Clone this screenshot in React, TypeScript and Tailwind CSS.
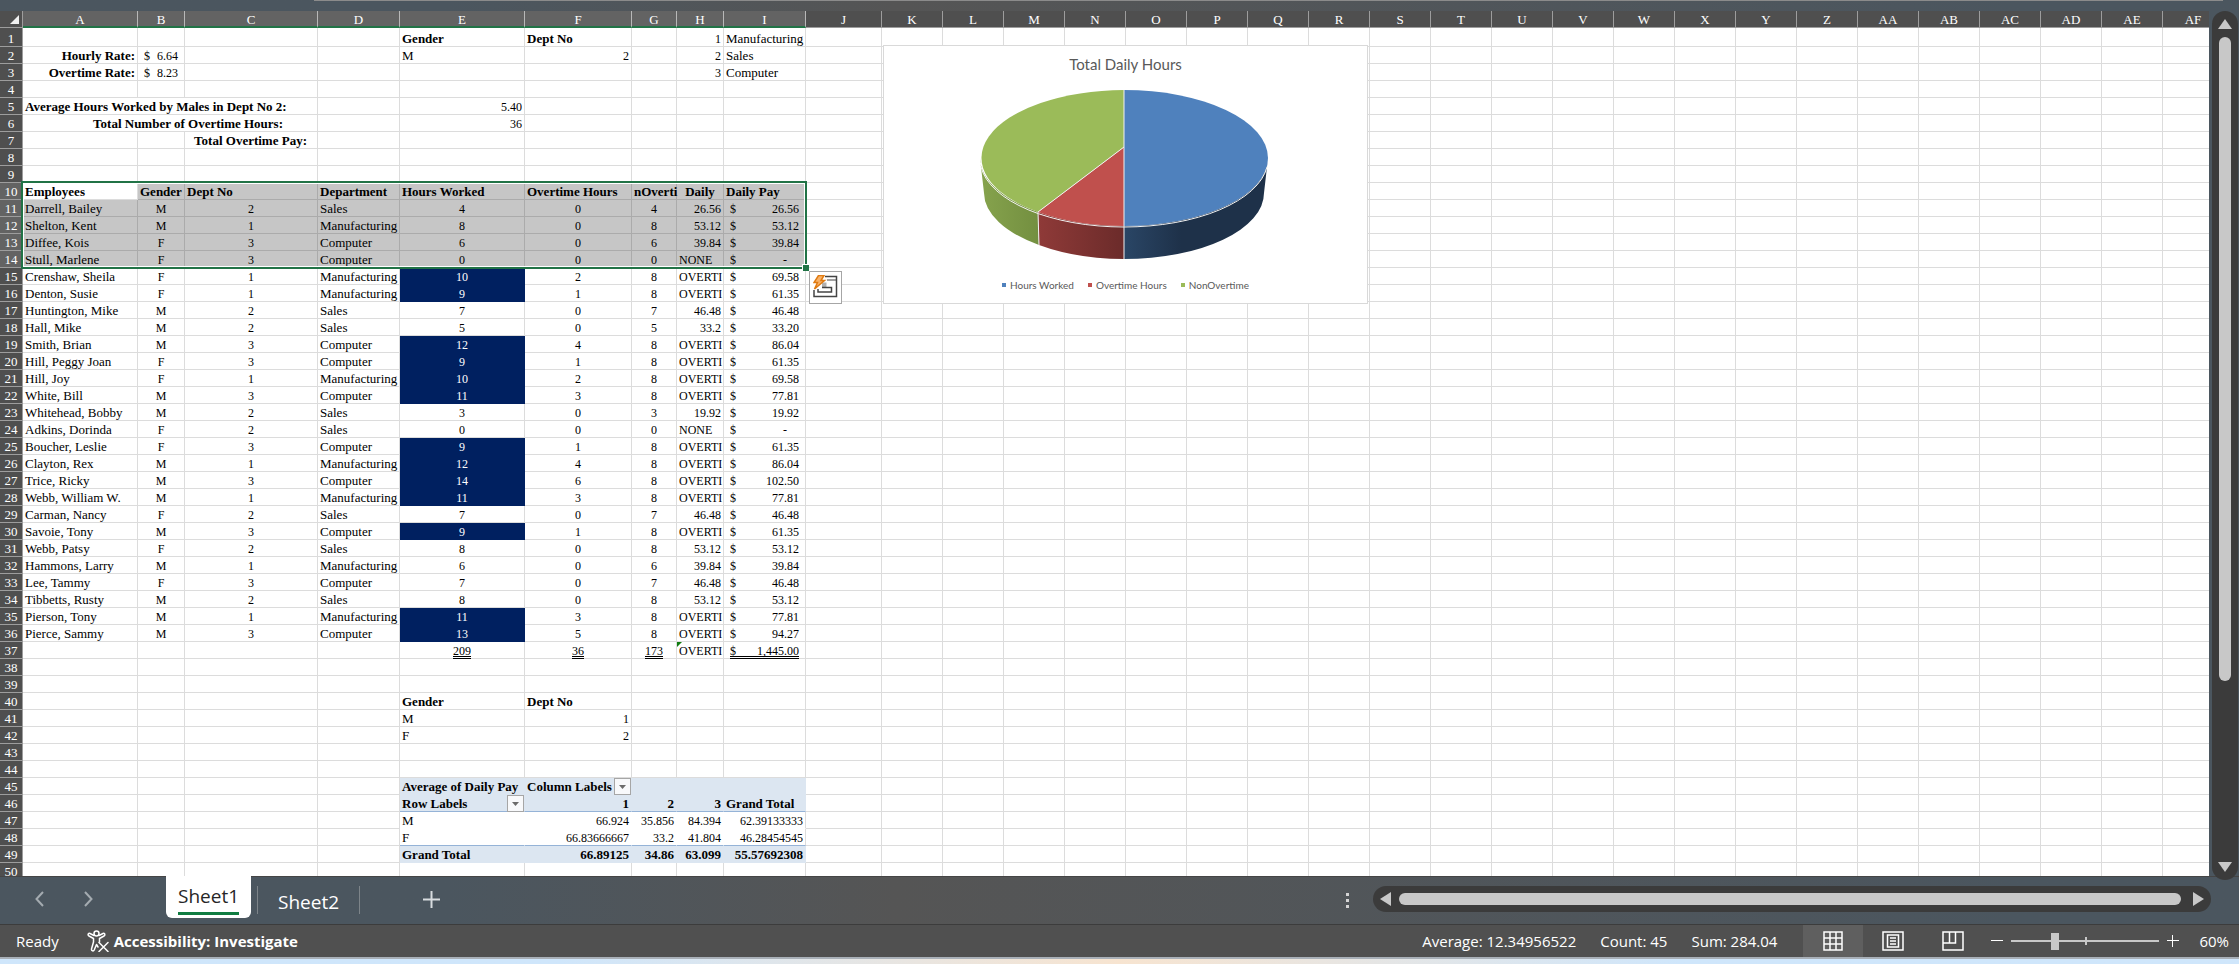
import { ReactNode } from "react";

type Align = "left" | "center" | "right";

type Cell = {
  v?: ReactNode;
  bold?: boolean;
  num?: boolean;
  align?: Align;
  span?: number;
  cls?: string;
  money?: boolean;
  total?: boolean;
};

const COLS = [
  "A", "B", "C", "D", "E", "F", "G", "H", "I", "J", "K", "L", "M", "N", "O", "P",
  "Q", "R", "S", "T", "U", "V", "W", "X", "Y", "Z", "AA", "AB", "AC", "AD", "AE", "AF",
];

const WIDTHS = [
  "w-[115px]", "w-[47px]", "w-[133px]", "w-[82px]", "w-[125px]",
  "w-[107px]", "w-[45px]", "w-[47px]", "w-[82px]", "w-[76px]",
];

// name, gender, dept, department, hours, overtime, non overtime, daily, pay
const EMPLOYEES = [
  ["Darrell, Bailey", "M", "2", "Sales", "4", "0", "4", "26.56", "26.56"],
  ["Shelton, Kent", "M", "1", "Manufacturing", "8", "0", "8", "53.12", "53.12"],
  ["Diffee, Kois", "F", "3", "Computer", "6", "0", "6", "39.84", "39.84"],
  ["Stull, Marlene", "F", "3", "Computer", "0", "0", "0", "NONE", "-"],
  ["Crenshaw, Sheila", "F", "1", "Manufacturing", "10", "2", "8", "OVERTI", "69.58"],
  ["Denton, Susie", "F", "1", "Manufacturing", "9", "1", "8", "OVERTI", "61.35"],
  ["Huntington, Mike", "M", "2", "Sales", "7", "0", "7", "46.48", "46.48"],
  ["Hall, Mike", "M", "2", "Sales", "5", "0", "5", "33.2", "33.20"],
  ["Smith, Brian", "M", "3", "Computer", "12", "4", "8", "OVERTI", "86.04"],
  ["Hill, Peggy Joan", "F", "3", "Computer", "9", "1", "8", "OVERTI", "61.35"],
  ["Hill, Joy", "F", "1", "Manufacturing", "10", "2", "8", "OVERTI", "69.58"],
  ["White, Bill", "M", "3", "Computer", "11", "3", "8", "OVERTI", "77.81"],
  ["Whitehead, Bobby", "M", "2", "Sales", "3", "0", "3", "19.92", "19.92"],
  ["Adkins, Dorinda", "F", "2", "Sales", "0", "0", "0", "NONE", "-"],
  ["Boucher, Leslie", "F", "3", "Computer", "9", "1", "8", "OVERTI", "61.35"],
  ["Clayton, Rex", "M", "1", "Manufacturing", "12", "4", "8", "OVERTI", "86.04"],
  ["Trice, Ricky", "M", "3", "Computer", "14", "6", "8", "OVERTI", "102.50"],
  ["Webb, William W.", "M", "1", "Manufacturing", "11", "3", "8", "OVERTI", "77.81"],
  ["Carman, Nancy", "F", "2", "Sales", "7", "0", "7", "46.48", "46.48"],
  ["Savoie, Tony", "M", "3", "Computer", "9", "1", "8", "OVERTI", "61.35"],
  ["Webb, Patsy", "F", "2", "Sales", "8", "0", "8", "53.12", "53.12"],
  ["Hammons, Larry", "M", "1", "Manufacturing", "6", "0", "6", "39.84", "39.84"],
  ["Lee, Tammy", "F", "3", "Computer", "7", "0", "7", "46.48", "46.48"],
  ["Tibbetts, Rusty", "M", "2", "Sales", "8", "0", "8", "53.12", "53.12"],
  ["Pierson, Tony", "M", "1", "Manufacturing", "11", "3", "8", "OVERTI", "77.81"],
  ["Pierce, Sammy", "M", "3", "Computer", "13", "5", "8", "OVERTI", "94.27"],
];

const text = (v: ReactNode): Cell => ({ v });
const bold = (v: ReactNode, align: Align = "left"): Cell => ({ v, bold: true, align });
const num = (v: ReactNode, align: Align = "right"): Cell => ({ v, num: true, align });

const FilterButton = ({ label }: { label: string }) => (
  <button
    aria-label={label}
    className="-mr-[2px] flex size-[17px] shrink-0 items-center justify-center border border-[#a6a6a6] bg-[#f8f9fb]"
  >
    <svg width="7" height="4" viewBox="0 0 7 4">
      <path d="M0 0h7L3.5 4z" fill="#6b6b6b" />
    </svg>
  </button>
);

const PIVOT = "bg-[#dce6f1] border-[#dce6f1]";
const PIVOT_LINE = "bg-[#dce6f1] border-r-[#dce6f1] border-b-[#95b3d7]";
const PLAIN = "border-white";
const PLAIN_LINE = "border-r-white border-b-[#95b3d7]";

const SHEET: Record<number, Record<string, Cell>> = {
  1: { E: bold("Gender"), F: bold("Dept No"), H: num("1"), I: text("Manufacturing") },
  2: {
    A: bold("Hourly Rate:", "right"),
    B: { v: "6.64", money: true },
    E: text("M"),
    F: num("2"),
    H: num("2"),
    I: text("Sales"),
  },
  3: {
    A: bold("Overtime Rate:", "right"),
    B: { v: "8.23", money: true },
    H: num("3"),
    I: text("Computer"),
  },
  5: {
    A: { ...bold("Average Hours Worked by Males in Dept No 2:"), span: 3 },
    E: num("5.40"),
  },
  6: {
    A: { v: <span className="pr-8">Total Number of Overtime Hours:</span>, bold: true, align: "right", span: 3 },
    E: num("36"),
  },
  7: { C: bold(<span className="pr-2">Total Overtime Pay:</span>, "right") },
  10: {
    A: bold("Employees"),
    B: bold("Gender"),
    C: bold("Dept No"),
    D: bold("Department"),
    E: bold("Hours Worked"),
    F: bold("Overtime Hours"),
    G: bold("nOverti", "center"),
    H: bold("Daily", "center"),
    I: bold("Daily Pay"),
  },
  37: {
    E: { v: "209", num: true, align: "center", total: true },
    F: { v: "36", num: true, align: "center", total: true },
    G: { v: "173", num: true, align: "center", total: true },
    H: { v: "OVERTI", num: true },
    I: { v: "1,445.00", money: true, total: true },
  },
  40: { E: bold("Gender"), F: bold("Dept No") },
  41: { E: text("M"), F: num("1") },
  42: { E: text("F"), F: num("2") },
  45: {
    E: { ...bold("Average of Daily Pay"), cls: PIVOT },
    F: {
      v: (
        <span className="flex justify-between">
          Column Labels <FilterButton label="Filter column labels" />
        </span>
      ),
      bold: true,
      cls: PIVOT,
    },
    G: { cls: PIVOT },
    H: { cls: PIVOT },
    I: { cls: PIVOT },
  },
  46: {
    E: {
      v: (
        <span className="flex justify-between">
          Row Labels <FilterButton label="Filter row labels" />
        </span>
      ),
      bold: true,
      cls: PIVOT_LINE,
    },
    F: { ...bold("1", "right"), cls: PIVOT_LINE },
    G: { ...bold("2", "right"), cls: PIVOT_LINE },
    H: { ...bold("3", "right"), cls: PIVOT_LINE },
    I: { ...bold("Grand Total"), cls: PIVOT_LINE },
  },
  47: {
    E: { ...text("M"), cls: PLAIN },
    F: { ...num("66.924"), cls: PLAIN },
    G: { ...num("35.856"), cls: PLAIN },
    H: { ...num("84.394"), cls: PLAIN },
    I: { ...num("62.39133333"), cls: "border-r-[#dcdcdc] border-b-white" },
  },
  48: {
    E: { ...text("F"), cls: PLAIN_LINE },
    F: { ...num("66.83666667"), cls: PLAIN_LINE },
    G: { ...num("33.2"), cls: PLAIN_LINE },
    H: { ...num("41.804"), cls: PLAIN_LINE },
    I: { ...num("46.28454545"), cls: "border-r-[#dcdcdc] border-b-[#95b3d7]" },
  },
  49: {
    E: { ...bold("Grand Total"), cls: PIVOT },
    F: { ...bold("66.89125", "right"), cls: PIVOT },
    G: { ...bold("34.86", "right"), cls: PIVOT },
    H: { ...bold("63.099", "right"), cls: PIVOT },
    I: { ...bold("55.57692308", "right"), cls: PIVOT },
  },
};

EMPLOYEES.forEach((e, i) => {
  const daily = e[7];
  SHEET[11 + i] = {
    A: text(e[0]),
    B: num(e[1], "center"),
    C: num(e[2], "center"),
    D: text(e[3]),
    E: { ...num(e[4], "center"), cls: Number(e[4]) > 8 ? "bg-[#002060] text-white border-[#002060]" : "" },
    F: num(e[5], "center"),
    G: num(e[6], "center"),
    H: num(daily, /^\d/.test(daily) ? "right" : "left"),
    I: { v: e[8], money: true },
  };
});

const GridCell = ({ cell, row, col }: { cell?: Cell; row: number; col: number }) => {
  const selected = row >= 10 && row <= 14 && col < 9 && !(row === 10 && col === 0);
  const align =
    cell?.align === "right" ? "text-right" : cell?.align === "center" ? "text-center" : "text-left";

  let body = cell?.v;
  if (cell?.money) {
    body = (
      <span
        className={
          cell.total
            ? "mx-[5px] flex h-[17px] justify-between border-b-3 border-double border-black"
            : "flex justify-between px-[5px]"
        }
      >
        <span>$</span>
        <span className={cell.v === "-" ? "pr-3" : ""}>{cell.v}</span>
      </span>
    );
  } else if (cell?.total) {
    body = (
      <span className="mx-auto block h-[17px] w-fit border-b-3 border-double border-black">{cell.v}</span>
    );
  }

  return (
    <td
      colSpan={cell?.span}
      className={`h-[17px] border-r border-b p-0 align-bottom ${
        selected ? "border-[#ababab] bg-[#c6c6c6]" : cell?.cls || "border-[#dcdcdc]"
      }`}
    >
      {cell && (
        <div
          className={`relative h-4 whitespace-nowrap leading-[18px] ${align} ${
            cell.money ? "px-px" : "px-[2px]"
          } ${cell.num || cell.money ? "text-xs" : "text-[13px]"} ${cell.bold ? "font-bold" : ""}`}
        >
          {row === 37 && col === 7 && (
            <svg className="absolute top-0 left-0" width="5" height="5">
              <path d="M0 0h5L0 5z" fill="#107c10" />
            </svg>
          )}
          {body}
        </div>
      )}
    </td>
  );
};

const Grid = () => (
  <table className="w-0 table-fixed border-separate border-spacing-0 bg-white font-['Liberation_Serif','Times_New_Roman',serif] text-black">
    <colgroup>
      <col className="w-[23px]" />
      {COLS.map((c, i) => (
        <col key={c} className={WIDTHS[i] || "w-[61px]"} />
      ))}
    </colgroup>
    <thead>
      <tr className="text-[13px] text-white">
        <th className="h-[17px] border-r border-b border-[#9d9d9d] bg-[#4f4f4f] p-0">
          <svg className="ml-[10px]" width="9" height="9">
            <path d="M9 0v9H0z" fill="#f0f0f0" />
          </svg>
        </th>
        {COLS.map((c, i) => (
          <th
            key={c}
            scope="col"
            className={`border-r p-0 align-top font-normal ${
              i < 9
                ? "border-b-2 border-r-[#b8b8b8] border-b-[#217346] bg-[#636363]"
                : "border-b border-[#9d9d9d] bg-[#4f4f4f]"
            }`}
          >
            <div className="h-[15px] leading-[17px]">{c}</div>
          </th>
        ))}
      </tr>
    </thead>
    <tbody>
      {Array.from({ length: 50 }, (_, r) => {
        const row = r + 1;
        const cells = SHEET[row] || {};
        const skip = (cells.A?.span || 1) - 1;
        return (
          <tr key={row} className={row === 1 ? "h-[19px]" : "h-[17px]"}>
            <th
              scope="row"
              className={`border-r border-b border-[#9d9d9d] p-0 align-bottom text-[13px] font-normal text-white ${
                row >= 10 && row <= 14 ? "bg-[#636363]" : "bg-[#4f4f4f]"
              }`}
            >
              <div className="h-4 leading-[18px]">{row}</div>
            </th>
            {COLS.map((c, i) =>
              i > 0 && i <= skip ? null : <GridCell key={c} cell={cells[c]} row={row} col={i} />
            )}
          </tr>
        );
      })}
    </tbody>
  </table>
);

const LEGEND = [
  { label: "Hours Worked", color: "bg-[#4f81bd]" },
  { label: "Overtime Hours", color: "bg-[#c0504d]" },
  { label: "NonOvertime", color: "bg-[#9bbb59]" },
];

const PieChart = () => (
  <div className="absolute top-[34px] left-[883px] h-[259px] w-[485px] border border-[#d9d9d9] bg-white font-[Lato,sans-serif] text-[#595959]">
    <p className="absolute inset-x-0 top-2 text-center text-[15px] leading-5">Total Daily Hours</p>
    <svg width="483" height="257" viewBox="1 1 483 257">
      <defs>
        <linearGradient id="blueSide" x1="0" x2="1">
          <stop offset="0" stopColor="#2a4666" />
          <stop offset="0.4" stopColor="#1e3149" />
          <stop offset="1" stopColor="#1e3149" />
        </linearGradient>
        <linearGradient id="redSide" x1="0" x2="1">
          <stop offset="0" stopColor="#8f3a38" />
          <stop offset="1" stopColor="#6b2b2a" />
        </linearGradient>
        <linearGradient id="greenSide" x1="0" x2="1">
          <stop offset="0" stopColor="#86a34d" />
          <stop offset="1" stopColor="#738f40" />
        </linearGradient>
      </defs>
      <path d="M97 113L101 148A140 66 0 0 0 156 200L155 167A144 68 0 0 1 97 113z" fill="url(#greenSide)" />
      <path d="M155 167L156 200A140 66 0 0 0 241 214V181A144 68 0 0 1 155 167z" fill="url(#redSide)" />
      <path d="M241 181V214A140 66 0 0 0 381 148L385 113A144 68 0 0 1 241 181z" fill="url(#blueSide)" />
      <path d="M241 102V45A144 68 0 0 1 241 181z" fill="#4f81bd" />
      <path d="M241 102V181A144 68 0 0 1 155 167z" fill="#c0504d" />
      <path d="M241 102L155 167A144 68 0 0 1 241 45z" fill="#9bbb59" />
      <path
        d="M98 122A144 68 0 0 0 384 122M241 45V181M241 102L155 167L156 200M241 181V214"
        fill="none"
        stroke="#f2f2f2"
      />
    </svg>
    <ul className="absolute inset-x-0 bottom-[10px] flex justify-center gap-[14px] text-[10px] leading-4">
      {LEGEND.map((l) => (
        <li key={l.label} className="flex items-center gap-1">
          <span className={`size-1 ${l.color}`} />
          {l.label}
        </li>
      ))}
    </ul>
  </div>
);

const Selection = () => (
  <div className="pointer-events-none absolute top-[170px] left-[21px] h-[88px] w-[786px] border-2 border-[#217346]">
    <div className="h-full border border-white" />
    <span className="absolute -right-1 -bottom-1 size-[7px] border-t border-l border-white bg-[#217346]" />
  </div>
);

const QuickAnalysis = () => (
  <button
    aria-label="Quick analysis"
    className="absolute top-[260px] left-[809px] flex size-[33px] items-center justify-center border border-[#a6a6a6] bg-white"
  >
    <svg width="25" height="25" viewBox="0 0 25 25" fill="none">
      <path d="M12 1.500H23.500V21.500H1V15" stroke="#444" strokeWidth="1.500" />
      <path d="M14 5H23" stroke="#444" />
      <path d="M9 7.500h4.500v5H9z" fill="#b0b0b0" />
      <path d="M9 12.500H18.500V17H5V14" stroke="#444" strokeWidth="1.500" />
      <path d="M5.500 .5H11L8 5.500H11.500L1.500 14L4.500 7.500H1z" fill="#f9b268" stroke="#e07b12" strokeWidth="1.500" />
    </svg>
  </button>
);

const VerticalScroll = () => (
  <div className="relative z-10 mr-px -mb-1 ml-[3px] flex w-[26px] shrink-0 flex-col items-center rounded-full bg-[#3b3b3b] pt-2 pb-2">
    <button aria-label="Scroll up">
      <svg className="block" width="14" height="10">
        <path d="M7 0L14 10H0z" fill="#c8c8c8" />
      </svg>
    </button>
    <div className="flex w-full flex-1 flex-col items-center pt-2 pb-1">
      <div className="w-3 grow-[642] basis-0 rounded-full bg-[#c8c8c8]" />
      <div className="grow-[177] basis-0" />
    </div>
    <button aria-label="Scroll down">
      <svg className="block" width="14" height="10">
        <path d="M0 0H14L7 10z" fill="#c8c8c8" />
      </svg>
    </button>
  </div>
);

const TabBar = () => (
  <div className="flex h-12 shrink-0 items-start border-t border-[#454545]">
    <div className="flex w-[166px] shrink-0 gap-10 pt-[14px] pl-[35px]">
      <button aria-label="Previous sheet">
        <svg className="block" width="9" height="16" fill="none" stroke="#a4abb0" strokeWidth="2">
          <path d="M8 1L1.500 8L8 15" />
        </svg>
      </button>
      <button aria-label="Next sheet">
        <svg className="block" width="9" height="16" fill="none" stroke="#a4abb0" strokeWidth="2">
          <path d="M1 1L7.500 8L1 15" />
        </svg>
      </button>
    </div>
    <button className="-mt-px h-[42px] rounded-b-md bg-white px-3 text-[19px] leading-8 text-[#262626]">
      <span className="block border-b-3 border-[#107c41]">Sheet1</span>
    </button>
    <div className="mt-[9px] ml-[6px] flex h-7 items-center border-x border-[#7d8489]">
      <button className="px-5 pt-1 text-[19px] leading-7 text-white">Sheet2</button>
    </div>
    <button aria-label="New sheet" className="mt-[14px] ml-[63px]">
      <svg className="block" width="17" height="17" stroke="#d8dcdf" strokeWidth="2">
        <path d="M8.500 0V17M0 8.500H17" />
      </svg>
    </button>
    <div className="flex-1" />
    <svg className="mt-4 shrink-0" width="4" height="16" fill="#d4d4d4">
      <path d="M0 0h3v3H0zM0 6h3v3H0zM0 12h3v3H0z" />
    </svg>
    <div className="mt-[9px] mr-7 ml-[23px] flex h-[26px] w-[838px] items-center justify-between rounded-full bg-[#3b3b3b] px-[7px]">
      <button aria-label="Scroll left">
        <svg className="block" width="11" height="14">
          <path d="M11 0V14L0 7z" fill="#c8c8c8" />
        </svg>
      </button>
      <div className="mr-3 ml-2 h-3 flex-1 rounded-full bg-[#c8c8c8]" />
      <button aria-label="Scroll right">
        <svg className="block" width="11" height="14">
          <path d="M0 0V14L11 7z" fill="#c8c8c8" />
        </svg>
      </button>
    </div>
  </div>
);

const StatusBar = () => (
  <div className="flex h-[33px] shrink-0 items-center border-t border-[#3c3c3c] bg-[#505050] pr-[10px] pl-4 text-[15px] text-white">
    <span>Ready</span>
    <button className="ml-7 flex items-center gap-[5px] font-bold">
      <svg width="22" height="22" viewBox="0 0 22 22" fill="none" stroke="#fff" strokeWidth="1.500" strokeLinecap="round" strokeLinejoin="round">
        <circle cx="9.500" cy="3.500" r="2.500" />
        <path d="M7 5.500L3 3.500C1 2.800 .500 5.200 2 6L6.500 8.500V12L4.500 19C4.200 21 6.500 21.500 7.200 20L9.500 14.500L11 17" />
        <path d="M12 5.500L16 3.500C18 2.800 18.500 5.200 17 6L12.500 8.500V12" />
        <path d="M12 12.500L21 21.500M21 12.500L12 21.500" />
      </svg>
      Accessibility: Investigate
    </button>
    <div className="flex-1" />
    <div className="flex gap-6 pr-[26px]">
      <span>Average: 12.34956522</span>
      <span>Count: 45</span>
      <span>Sum: 284.04</span>
    </div>
    <div className="flex h-full">
      <button aria-label="Normal view" className="flex w-[60px] items-center justify-center bg-[#5f5f5f]">
        <svg width="20" height="20" fill="none" stroke="#fff" strokeWidth="1.500">
          <path d="M1 1h18v18H1zM7 1v18M13 1v18M1 7h18M1 13h18" />
        </svg>
      </button>
      <button aria-label="Page layout" className="flex w-[60px] items-center justify-center">
        <svg width="22" height="20" fill="none" stroke="#fff" strokeWidth="1.500">
          <path d="M1 1h20v18H1z" />
          <path d="M5.500 4h11v12h-11zM8 7h6M8 10h6M8 13h6" />
        </svg>
      </button>
      <button aria-label="Page break preview" className="flex w-[60px] items-center justify-center">
        <svg width="22" height="20" fill="none" stroke="#fff" strokeWidth="1.500">
          <path d="M1 1h20v18H1zM7.500 1v11M1 12h12.500V1" />
        </svg>
      </button>
    </div>
    <button aria-label="Zoom out" className="ml-2">
      <svg className="block" width="12" height="12" stroke="#fff">
        <path d="M0 5.500H12" />
      </svg>
    </button>
    <div className="relative ml-2 flex w-[148px] items-center">
      <span className="absolute left-1/2 h-2 w-[2px] bg-[#c8c8c8]" />
      <input
        type="range"
        aria-label="Zoom"
        min={0}
        max={100}
        defaultValue={28}
        className="relative h-[2px] w-full appearance-none bg-[#c8c8c8] [&::-webkit-slider-thumb]:h-[17px] [&::-webkit-slider-thumb]:w-2 [&::-webkit-slider-thumb]:appearance-none [&::-webkit-slider-thumb]:bg-[#c8c8c8]"
      />
    </div>
    <button aria-label="Zoom in" className="mr-5 ml-2">
      <svg className="block" width="12" height="12" stroke="#fff">
        <path d="M0 5.500H12M5.500 0V12" />
      </svg>
    </button>
    <span>60%</span>
  </div>
);

export default function App() {
  return (
    <div className="flex h-screen flex-col overflow-hidden bg-linear-to-r from-[#4b565f] from-20% via-[#555555] via-40% to-[#4b565f] to-90% font-['Open_Sans','Segoe_UI',sans-serif]">
      <div className="h-[11px] shrink-0 pr-4 pl-[314px]">
        <div className="h-px bg-[#8b8b8b]" />
      </div>
      <div className="flex min-h-0 flex-1">
        <main className="relative min-w-0 flex-1 overflow-hidden bg-white">
          <Grid />
          <PieChart />
          <Selection />
          <QuickAnalysis />
        </main>
        <VerticalScroll />
      </div>
      <TabBar />
      <StatusBar />
      <div className="h-[2px] shrink-0 bg-[#a9b0b8]" />
      <div className="h-[5px] shrink-0 bg-linear-to-r from-[#cfe6fb] from-25% via-[#f7e4d0] via-50% to-[#cfe6fb] to-75%" />
    </div>
  );
}
